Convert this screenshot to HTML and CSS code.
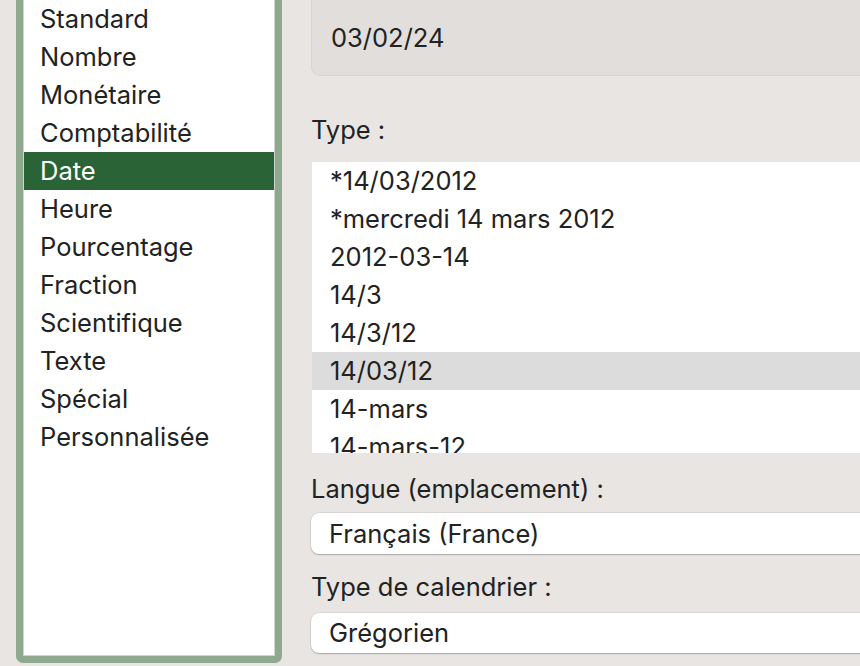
FILE: index.html
```html
<!DOCTYPE html>
<html lang="fr">
<head>
<meta charset="utf-8">
<link rel="stylesheet" href="styles.css">
</head>
<body>
<div class="dialog">
  <div class="cat-panel">
    <ul class="cat-list">
      <li>Standard</li>
      <li>Nombre</li>
      <li>Monétaire</li>
      <li>Comptabilité</li>
      <li class="sel">Date</li>
      <li>Heure</li>
      <li>Pourcentage</li>
      <li>Fraction</li>
      <li>Scientifique</li>
      <li>Texte</li>
      <li>Spécial</li>
      <li>Personnalisée</li>
    </ul>
  </div>
  <div class="detail">
    <div class="preview">03/02/24</div>
    <div class="label label-type">Type :</div>
    <ul class="type-list">
      <li>*14/03/2012</li>
      <li>*mercredi 14 mars 2012</li>
      <li>2012-03-14</li>
      <li>14/3</li>
      <li>14/3/12</li>
      <li class="sel">14/03/12</li>
      <li>14-mars</li>
      <li>14-mars-12</li>
    </ul>
    <div class="label label-lang">Langue (emplacement) :</div>
    <div class="popup popup-lang">Français (France)</div>
    <div class="label label-cal">Type de calendrier :</div>
    <div class="popup popup-cal">Grégorien</div>
  </div>
</div>
</body>
</html>
```
FILE: styles.css
```css
html, body {
  margin: 0;
  padding: 0;
  width: 860px;
  height: 666px;
  overflow: hidden;
  background: #e8e5e2;
  font-family: Inter, "Liberation Sans", sans-serif;
  color: #222;
}
ul { list-style: none; margin: 0; padding: 0; }

.dialog {
  display: flex;
  align-items: flex-start;
  width: 1200px;
}

.cat-panel {
  margin-left: 16px;
  width: 252px;
  height: 656px;
  background: #8ea98d;
  padding: 0 7px 7px 7px;
  border-radius: 0 0 7px 7px;
  flex: none;
}
.cat-list {
  height: 656px;
  box-sizing: border-box;
  background: #fff;
  border: 1px solid #cfd3cf;
  border-top: none;
  font-size: 25.5px;
}
.cat-list li {
  height: 38px;
  line-height: 38px;
  padding-left: 16px;
}
.cat-list li.sel {
  background: #2a6436;
  color: #fff;
}

.detail {
  margin-left: 29px;
  width: 640px;
  flex: none;
  font-size: 25.5px;
}
.preview {
  height: 76px;
  line-height: 76px;
  box-sizing: border-box;
  background: #e1dedc;
  border: 1px solid #d6d3d1;
  border-top: none;
  border-radius: 0 0 9px 9px;
  padding-left: 19px;
}
.label {
  line-height: 32px;
  height: 32px;
}
.label-type { margin-top: 38px; }
.type-list {
  margin-top: 16px;
  margin-left: 1px;
  height: 291px;
  overflow: hidden;
  background: #fff;
}
.type-list li {
  height: 38px;
  line-height: 38px;
  padding-left: 18px;
}
.type-list li.sel { background: #dcdcdc; }

.label-lang { margin-top: 20px; }
.popup {
  background: #fff;
  border-radius: 8px;
  box-shadow: 0 0 0 0.5px rgba(0,0,0,0.12), 0 1px 1.5px rgba(0,0,0,0.22);
  padding-left: 18px;
}
.popup-lang {
  margin-top: 8px;
  height: 41px;
  line-height: 41px;
}
.label-cal { margin-top: 17px; }
.popup-cal {
  margin-top: 10px;
  height: 40px;
  line-height: 40px;
}
```
